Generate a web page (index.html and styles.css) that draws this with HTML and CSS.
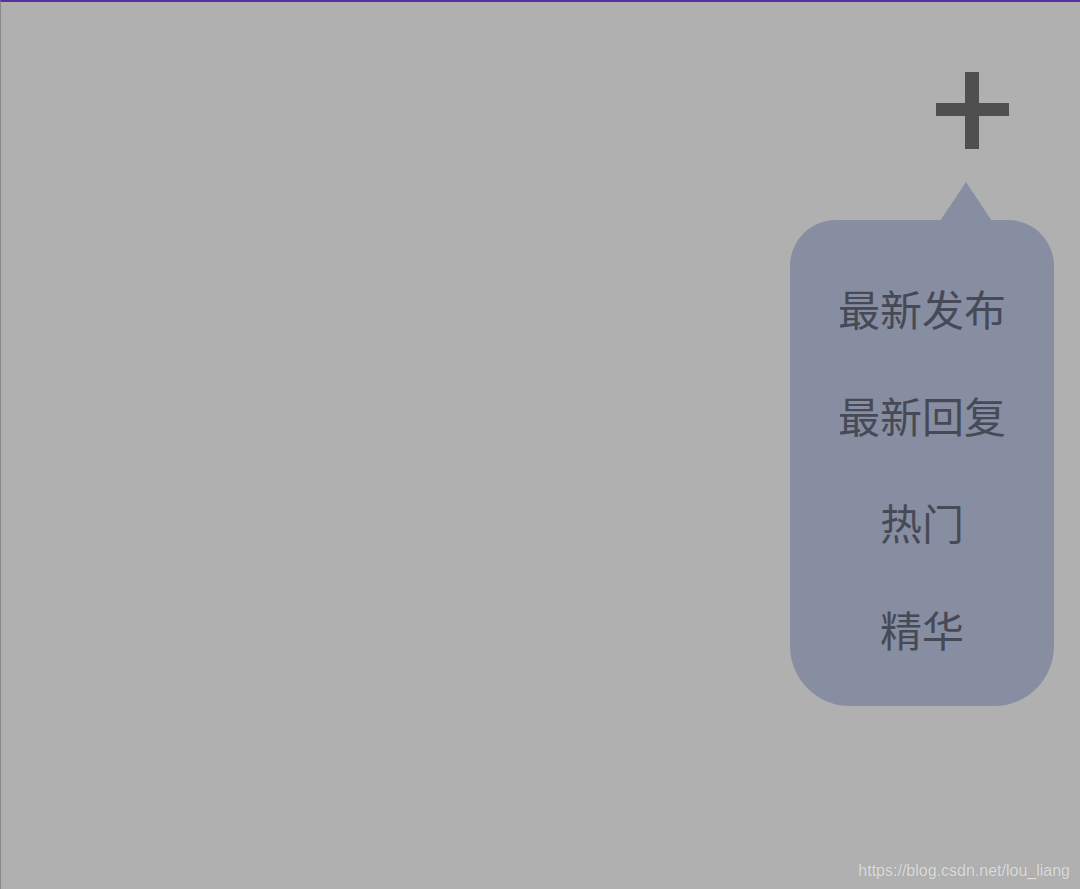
FILE: index.html
```html
<!DOCTYPE html>
<html lang="zh">
<head>
<meta charset="utf-8">
<title>Popup</title>
<link rel="stylesheet" href="styles.css">
</head>
<body>
<div class="screen">
  <div class="plus" aria-label="add">
    <svg width="73" height="77" viewBox="0 0 73 77"><rect x="29" y="0" width="14" height="77" fill="#4f4f4f"/><rect x="0" y="31" width="73" height="13" fill="#4f4f4f"/></svg>
  </div>
  <div class="popup">
    <div class="item">最新发布</div>
    <div class="item">最新回复</div>
    <div class="item">热门</div>
    <div class="item">精华</div>
  </div>
  <div class="watermark">https://blog.csdn.net/lou_liang</div>
</div>
</body>
</html>
```
FILE: styles.css
```css
html, body {
  margin: 0;
  padding: 0;
  height: 100%;
  overflow: hidden;
}
body {
  background: #b0b0b0;
  font-family: "Noto Sans CJK SC", "Noto Sans", sans-serif;
}
.screen {
  position: relative;
  box-sizing: border-box;
  height: 889px;
  border-top: 2px solid #52339f;
  border-left: 1px solid #8a8a8a;
  display: flex;
  flex-direction: column;
  align-items: flex-end;
  padding-top: 70px;
}
.plus {
  margin-right: 71px;
  height: 77px;
  line-height: 0;
}
.popup {
  position: relative;
  margin-top: 71px;
  margin-right: 26px;
  width: 264px;
  box-sizing: border-box;
  padding: 34px 0 24px;
  background: #888ea1;
  border-radius: 46px 46px 60px 60px;
}
.popup::before {
  content: "";
  position: absolute;
  top: -38px;
  left: 150px;
  width: 52px;
  height: 39px;
  background: #888ea1;
  clip-path: polygon(50% 0, 100% 100%, 0 100%);
}
.item {
  height: 107px;
  line-height: 107px;
  text-align: center;
  font-size: 42px;
  color: #464a56;
}
.watermark {
  position: absolute;
  right: 10px;
  bottom: 9px;
  font-family: "Liberation Sans", Arial, sans-serif;
  font-size: 16px;
  color: #dcdcdc;
  text-shadow: 0 0 1px #9a9a9a;
}
```
